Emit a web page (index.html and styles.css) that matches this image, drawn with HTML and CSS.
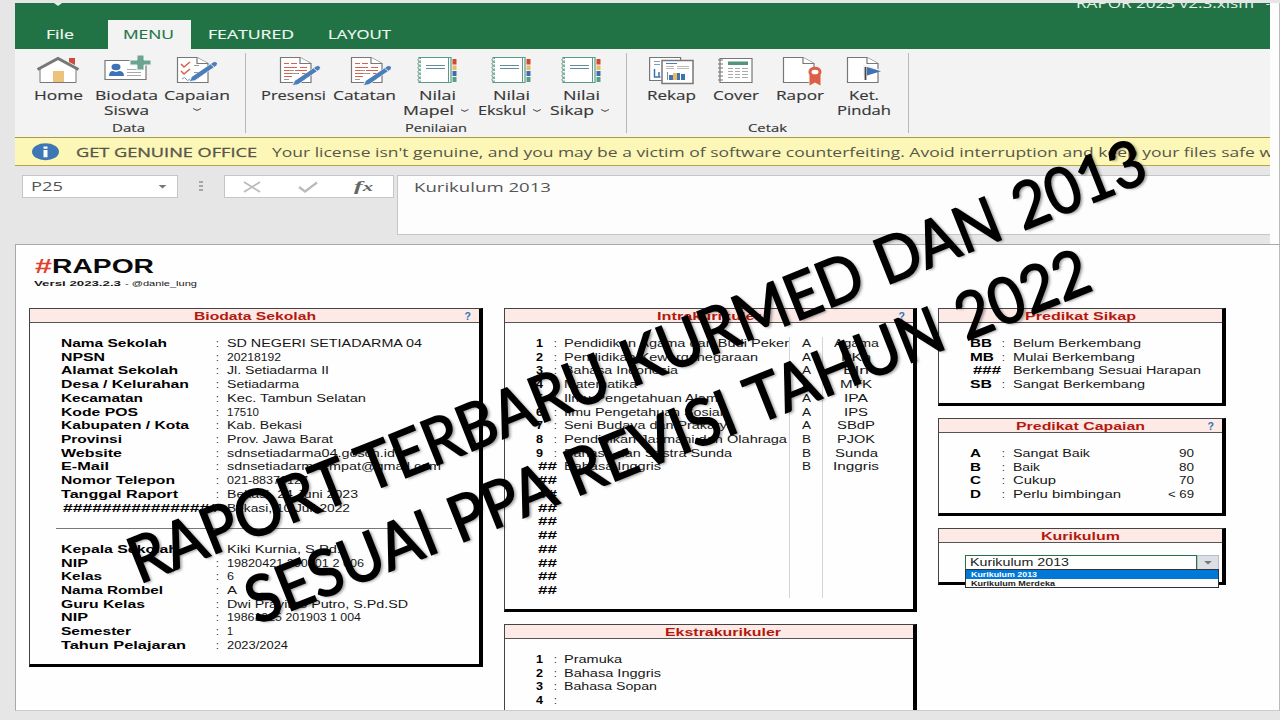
FILE: index.html
```
<!DOCTYPE html>
<html lang="id">
<head>
  <meta charset="UTF-8" />
  <meta name="viewport" content="width=device-width, initial-scale=1.0" />
  <title>RAPOR 2023 v2.3.xlsm</title>
  <link rel="stylesheet" href="styles.css">
</head>
<body>
  <svg width="0" height="0" class="defs">
    <defs>
      <g id="pencil">
        <path d="M14 28 L36 12.500 L39 11.500 L41 14 L19 30 L12 32 Z" fill="#4a7ebb" stroke="#f3f3f3" stroke-width="1"/>
        <path d="M15.500 29 L38.500 13.500" stroke="#4a7ebb" stroke-width="4"/>
        <path d="M33.500 14 L37 17" stroke="#dce6f2" stroke-width="1"/>
      </g>
      <g id="paper">
        <path d="M.5 3.500 H20 L31 9.500 V28.500 H.5 Z" fill="#fff" stroke="#777" stroke-width="1.200"/>
        <path d="M20 3.500 V9.500 H31" fill="#fff" stroke="#777" stroke-width="1.200"/>
      </g>
      <g id="note">
        <use href="#paper"/>
        <path d="M4 9.500h5m2 0h6M4 13.500h13m3 0h7M4 16.500h8m3 0h12M4 19.500h15m3 0h5M4 22.500h8" stroke="#d9604c" stroke-width="1"/>
        <path d="M9 16.500h5M4 25.500h5m3-6h6" stroke="#999" stroke-width="1"/>
        <use href="#pencil"/>
      </g>
      <g id="book">
        <path d="M3 3.500 H35 V28.500 H3 Z" fill="#fff" stroke="#5b9b86" stroke-width="1.200"/>
        <path d="M32.500 3.500 V28.500" stroke="#5b9b86" stroke-width="1"/>
        <path d="M1 5.500h4M1 9.500h4M1 13.500h4M1 17.500h4M1 21.500h4M1 25.500h4" stroke="#f3f3f3" stroke-width="3"/>
        <path d="M5 4.500a2 1.500 0 1 0 0 2.500M5 8.500a2 1.500 0 1 0 0 2.500M5 12.500a2 1.500 0 1 0 0 2.500M5 16.500a2 1.500 0 1 0 0 2.500M5 20.500a2 1.500 0 1 0 0 2.500M5 24.500a2 1.500 0 1 0 0 2.500" fill="none" stroke="#5b9b86" stroke-width="1"/>
        <path d="M10 11.500h19M10 14.500h19" stroke="#5f8f9b" stroke-width="1"/>
        <path d="M36.500 5h4v5.500h-4z" fill="#cc4b31"/>
        <path d="M36.500 11.500h4v4.500h-4z" fill="#ecb968"/>
        <path d="M36.500 17h4v5h-4z" fill="#3f6cab"/>
        <path d="M36.500 23h4v5h-4z" fill="#56a08a"/>
      </g>
    </defs>
  </svg>

  <div class="window">
    <div class="titlebar">
      <i class="qat"></i>
      <span class="file-name" data-w="178">RAPOR 2023 v2.3.xlsm</span>
      <span>-</span>
    </div>
    <div class="tabs">
      <div class="tab file"><span data-w="28">File</span></div>
      <div class="tab active"><span data-w="51">MENU</span></div>
      <div class="tab"><span data-w="86">FEATURED</span></div>
      <div class="tab"><span data-w="63">LAYOUT</span></div>
    </div>

    <div class="ribbon">
      <div class="group data">
        <div class="tools">
          <div class="tool">
            <svg width="44" height="34"><path d="M33 4h6v7l-6-3z" fill="#d0493b"/><path d="M4 15 L22 4 L40 15 V28.500 H4 Z" fill="#fff" stroke="#777" stroke-width="1"/><path d="M1.500 15.500 L22 4.500 L42.500 15.500" fill="none" stroke="#777" stroke-width="3"/><path d="M17 17h11v11h-11z" fill="#ecc27c"/></svg>
            <span data-w="49">Home</span>
          </div>
          <div class="tool">
            <svg width="46" height="34"><path d="M2 6.500h41v19H2z" fill="#fff" stroke="#777" stroke-width="1.200"/><ellipse cx="13" cy="13" rx="4.500" ry="3.200" fill="#3f72b5"/><path d="M6 22q0-5 4-5l3 1 3-1q5 0 5 5z" fill="#3f72b5"/><path d="M24 15.500h14M24 18.500h14M24 21.500h14" stroke="#aaa" stroke-width="1"/><path d="M34 1h7v5h7v5h-7v5h-7v-5h-7v-5h7z" fill="#6ba592" stroke="#f3f3f3"/></svg>
            <span data-w="63">Biodata</span><span data-w="45">Siswa</span>
          </div>
          <div class="tool">
            <svg width="40" height="34"><use href="#paper"/><path d="M4 10l3 3 6-5M4 17l3 3 6-5" fill="none" stroke="#d9604c" stroke-width="1.500"/><path d="M17 11.500h5m-5 7h6" stroke="#999"/><path d="M5 25q3-3 4 0t4 0" fill="none" stroke="#6d94c7"/><use href="#pencil" y="-4"/></svg>
            <span data-w="66">Capaian</span><i class="chev under"></i>
          </div>
        </div>
        <div class="caption"><span data-w="33">Data</span></div>
      </div>
      <div class="group penilaian">
        <div class="tools">
          <div class="tool"><svg class="doc" width="40" height="34"><use href="#note"/></svg><span data-w="65">Presensi</span></div>
          <div class="tool"><svg class="doc" width="40" height="34"><use href="#note"/></svg><span data-w="63">Catatan</span></div>
          <div class="tool"><svg width="42" height="34"><use href="#book"/></svg><span data-w="37">Nilai</span><div class="more"><span data-w="51">Mapel</span><i class="chev"></i></div></div>
          <div class="tool"><svg width="42" height="34"><use href="#book"/></svg><span data-w="37">Nilai</span><div class="more"><span data-w="48">Ekskul</span><i class="chev"></i></div></div>
          <div class="tool"><svg width="42" height="34"><use href="#book"/></svg><span data-w="37">Nilai</span><div class="more"><span data-w="44">Sikap</span><i class="chev"></i></div></div>
        </div>
        <div class="caption"><span data-w="62">Penilaian</span></div>
      </div>
      <div class="group cetak">
        <div class="tools">
          <div class="tool">
            <svg width="44" height="34"><path d="M.6 3.500h31v23h-31z" fill="#fff" stroke="#777" stroke-width="1.200"/><path d="M5 7.500h6M5 10.500h6" stroke="#7a9cc8"/><path d="M5.500 15v8h6M10 18v5" fill="none" stroke="#3f72b5" stroke-width="1.500"/><path d="M13 6.500h31v23h-31z" fill="#fff" stroke="#777" stroke-width="1.500"/><path d="M17 9.500h11" stroke="#4a7ebb"/><path d="M17 12.500h8m3 0h12M17 14.500h8m3 0h12" stroke="#aaa" stroke-width=".8"/><path d="M18.500 18v8" stroke="#888"/><path d="M20 21h4v5h-4zM28 19h3v7h-3z" fill="#3f72b5"/><path d="M24 19h4v7h-4z" fill="#ecb968"/><path d="M32 20h4v6h-4z" fill="#3f72b5"/></svg>
            <span data-w="49">Rekap</span>
          </div>
          <div class="tool">
            <svg width="38" height="34"><path d="M3 4.500h32v24H3z" fill="#fff" stroke="#777" stroke-width="1.200"/><path d="M11 7.500h20v3.500h-20z" fill="#56937b"/><path d="M11 14.500h5m2 0h5m2 0h6M11 17.500h5m2 0h5m2 0h6M11 20.500h5m2 0h5m2 0h6M11 23.500h5m2 0h5m2 0h6" stroke="#aaa"/><path d="M1 6h5M1 10h5M1 14h5M1 18h5M1 22h5M1 26h5" stroke="#777" stroke-width="1"/></svg>
            <span data-w="46">Cover</span>
          </div>
          <div class="tool">
            <svg width="42" height="34"><g transform="translate(4)"><use href="#paper"/></g><path d="M29 14h14v18l-6-3-7 3z" fill="#f3f3f3"/><path d="M30.500 21h11v10.500l-5.500-3-5.500 3z" fill="#dd5f45"/><ellipse cx="36" cy="18" rx="5" ry="3.800" fill="#fff" stroke="#dd5f45" stroke-width="3"/></svg>
            <span data-w="48">Rapor</span>
          </div>
          <div class="tool">
            <svg width="34" height="34"><use href="#paper"/><path d="M16 11h5l14 5.500-14 5h-5z" fill="#f3f3f3"/><path d="M18.500 13v13" stroke="#444" stroke-width="1.800"/><path d="M20 13l14 4.200-14 4.200z" fill="#3f72b5"/></svg>
            <span data-w="30">Ket.</span><span data-w="54">Pindah</span>
          </div>
        </div>
        <div class="caption"><span data-w="39">Cetak</span></div>
      </div>
    </div>

    <div class="notice">
      <svg width="28" height="18"><ellipse cx="13.500" cy="8.700" rx="13.500" ry="8.500" fill="#3f77b5"/><path d="M11.500 3.500h4v2.200h-4zM11.500 7h4v7.200h-4z" fill="#fff"/></svg>
      <span class="notice-title" data-w="181">GET GENUINE OFFICE</span>
      <span data-w="1001">Your license isn't genuine, and you may be a victim of software counterfeiting. Avoid interruption and keep your files safe w</span>
    </div>

    <div class="formula-bar">
      <div class="name-box"><span data-w="32">P25</span><i class="tri"></i></div>
      <svg width="6" height="12"><path d="M3 1v10" stroke="#a6a6a6" stroke-width="4" stroke-dasharray="2 2"/></svg>
      <div class="fx-box">
        <svg width="18" height="12"><path d="M1 1l16 10M17 1l-16 10" stroke="#bbb" stroke-width="1.800"/></svg>
        <svg width="20" height="12"><path d="M1 6l6 4.500L19 1.500" fill="none" stroke="#bbb" stroke-width="2.200"/></svg>
        <span class="fx" data-w="19">f<small>x</small></span>
      </div>
      <div class="formula"><span data-w="137">Kurikulum 2013</span></div>
    </div>
  </div>

  <div class="sheet">
    <div class="brand"><span class="hash" data-w="17">#</span><span data-w="102">RAPOR</span></div>
    <div class="version"><b data-w="87">Versi 2023.2.3</b><span data-w="72">- @danie_lung</span></div>

    <div class="columns">
      <section class="panel sekolah">
        <h2><span data-w="122">Biodata Sekolah</span><i class="help">?</i></h2>
        <div class="rows" id="sekolah"></div>
        <hr>
        <div class="rows" id="kelas"></div>
      </section>

      <div class="col">
        <section class="panel intra">
          <h2><span data-w="104">Intrakurikuler</span><i class="help">?</i></h2>
          <div class="rows" id="intra"></div>
        </section>
        <section class="panel ekstra">
          <h2><span data-w="116">Ekstrakurikuler</span></h2>
          <div class="rows" id="ekstra"></div>
        </section>
      </div>

      <div class="col">
        <section class="panel predikat">
          <h2><span data-w="111">Predikat Sikap</span></h2>
          <div class="rows" id="sikap"></div>
        </section>
        <section class="panel predikat">
          <h2><span data-w="129">Predikat Capaian</span><i class="help">?</i></h2>
          <div class="rows" id="capaian"></div>
        </section>
        <section class="panel kurikulum">
          <h2><span data-w="79">Kurikulum</span></h2>
          <div class="picker">
            <div class="picked"><span data-w="99">Kurikulum 2013</span></div>
            <div class="picker-btn"><i class="tri"></i></div>
            <div class="options">
              <div class="selected"><span data-w="66">Kurikulum 2013</span></div>
              <div><span data-w="84">Kurikulum Merdeka</span></div>
            </div>
          </div>
        </section>
      </div>
    </div>
  </div>

  <div class="headline">
    <div><span data-w="1090">RAPORT TERBARU KURMED DAN 2013</span></div>
    <div><span data-w="903">SESUAI PPA REVISI TAHUN 2022</span></div>
  </div>

  <script src="script.js"></script>
</body>
</html>
```
FILE: styles.css
```
* {
  box-sizing: border-box;
}

body {
  margin: 0;
  width: 1280px;
  height: 720px;
  overflow: hidden;
  position: relative;
  background: #e6e6e6;
  border-top: 3px solid #e6e6e6;
  font-family: "Open Sans", "Noto Sans", sans-serif;
  color: #444;
}

i {
  font-style: normal;
}

svg {
  overflow: visible;
  flex: none;
}

.defs {
  position: absolute;
}

[data-w] {
  display: inline-block;
  white-space: nowrap;
  flex: none;
  transform-origin: left center;
}

.window {
  margin-left: 15px;
  width: 1265px;
  height: 241px;
  overflow: hidden;
  background: linear-gradient(to right, #e6e6e6 1255px, #fdfdfd 1255px);
  border-right: 1px solid #bbb;
  padding-right: 9px;
}

/* title bar and tabs */
.titlebar {
  height: 17px;
  display: flex;
  justify-content: flex-end;
  gap: 12px;
  background: #217346;
  color: #e6f1ea;
  font-size: 13px;
  line-height: 17px;
  overflow: hidden;
}

.titlebar span {
  margin-top: -8px;
}

.qat {
  width: 8px;
  height: 3px;
  margin-right: auto;
  margin-left: 39px;
  background: #e6f1ea;
  clip-path: polygon(0 0, 100% 0, 50% 100%);
}

.tabs {
  height: 29px;
  display: flex;
  background: #217346;
  color: #f2f8f4;
  font-size: 12.500px;
  line-height: 29px;
  -webkit-text-stroke: .15px;
}

.tab {
  padding-right: 34px;
}

.tab.file {
  width: 93px;
  padding: 0 0 0 31px;
}

.tab.active {
  width: 83px;
  margin-right: 17px;
  padding: 0 0 0 15px;
  background: #f3f3f3;
  color: #217346;
}

/* ribbon */
.ribbon {
  height: 88px;
  display: flex;
  background: #f3f3f3;
  color: #363636;
  -webkit-text-stroke: .15px;
}

.group {
  height: 80px;
  margin-top: 4px;
  border-right: 1px solid #b8b8b8;
}

.group.data {
  width: 231px;
  padding-left: 9px;
}

.group.penilaian {
  width: 381px;
  padding-left: 11px;
}

.group.cetak {
  width: 282px;
  padding-left: 11px;
}

.tools {
  height: 68px;
  padding-top: 1px;
  display: grid;
}

.data .tools {
  grid-template-columns: 68px 68px 74px;
}

.penilaian .tools {
  grid-template-columns: 72px 70px 76px 72px 68px;
}

.cetak .tools {
  grid-template-columns: 66px 64px 64px 64px;
}

.tool {
  display: flex;
  flex-direction: column;
  align-items: center;
  font-size: 12.500px;
  line-height: 15px;
}

.tool svg.doc {
  margin-left: 14px;
}

.more {
  display: flex;
  align-items: center;
  gap: 7px;
  margin-left: -3px;
}

.chev {
  width: 8px;
  height: 3px;
  background: #555;
  clip-path: polygon(0 0, 50% 60%, 100% 0, 100% 35%, 50% 100%, 0 35%);
}

.chev.under {
  margin-top: 5px;
}

.caption {
  display: flex;
  justify-content: center;
  font-size: 11px;
  line-height: 14px;
}

.data .caption {
  padding-right: 13px;
}

.penilaian .caption {
  padding-right: 12px;
}

.cetak .caption {
  padding-right: 11px;
}

/* licence notice */
.notice {
  height: 29px;
  padding: 1px 0 0 17px;
  display: flex;
  align-items: center;
  overflow: hidden;
  background: #fcf7b6;
  border-top: 1px solid #a99d3c;
  border-bottom: 1px solid #b5a54a;
  font-size: 12.500px;
  color: #57564a;
}

.notice-title {
  margin-left: 16px;
  -webkit-text-stroke: .3px #57564a;
}

.notice-title + span {
  margin-left: 15px;
}

/* formula bar */
.formula-bar {
  padding: 9px 0 0 7px;
  display: flex;
  align-items: flex-start;
  font-size: 12px;
  color: #555;
}

.formula-bar > svg {
  margin: 5px 20px 0;
}

.name-box,
.fx-box {
  height: 23px;
  display: flex;
  align-items: center;
  justify-content: space-between;
  background: #fff;
  border: 1px solid #c6c6c6;
}

.name-box {
  width: 156px;
  padding: 0 10px 0 8px;
}

.tri {
  width: 9px;
  height: 4px;
  background: #777;
  clip-path: polygon(0 0, 100% 0, 50% 100%);
}

.fx-box {
  width: 170px;
  padding: 0 20px 0 18px;
}

.fx {
  font: italic bold 15px "Liberation Serif", serif;
  color: #666;
}

.fx small {
  font-size: 12px;
}

.formula {
  flex: 1;
  height: 60px;
  margin-left: 3px;
  padding: 3px 0 0 16px;
  background: #fdfdfd;
  border: 1px solid #c6c6c6;
  border-right: 0;
}

/* worksheet */
.sheet {
  --row: 13.73px;
  margin-left: 15px;
  height: 467px;
  overflow: hidden;
  padding-left: 13px;
  background: #fefefe;
  border: 1px solid #a8a8a8;
  border-right-color: #bbb;
  border-bottom-color: #ccc;
  font-family: "Liberation Sans", sans-serif;
  font-size: 10px;
  color: #161616;
}

.brand {
  height: 23px;
  padding: 10px 0 0 6px;
  display: flex;
  font-size: 20px;
  line-height: 23px;
  font-weight: bold;
  color: #0a0a0a;
}

.hash {
  color: #e2402c;
}

.version {
  padding: 10px 0 0 5px;
  height: 40px;
  display: flex;
  gap: 4px;
  font-size: 8px;
  line-height: 12px;
}

.columns {
  display: flex;
  align-items: flex-start;
}

.col {
  display: flex;
  flex-direction: column;
  gap: 12px;
  margin-left: 21px;
}

.panel {
  border: 1px solid #444;
  border-right: 4px solid #000;
  border-bottom: 3px solid #000;
}

.panel h2 {
  height: 14px;
  margin: 0 0 14px;
  display: flex;
  justify-content: center;
  position: relative;
  background: #fdeae6;
  border-bottom: 1px solid #555;
  font-size: 10.500px;
  line-height: 14px;
  color: #b3190f;
}

.help {
  position: absolute;
  right: 8px;
  color: #2e75b6;
}

.row {
  height: var(--row);
  display: grid;
  line-height: var(--row);
}

.row > * {
  white-space: nowrap;
}

.row b {
  color: #000;
}

.sekolah {
  width: 454px;
  height: 359px;
}

.sekolah .row {
  grid-template-columns: 155px 11px 1fr;
  padding-left: 31px;
}

.sekolah hr {
  height: 1px;
  margin: 13px 27px 13.460px 26px;
  border: 0;
  background: #777;
}

.intra,
.ekstra {
  width: 413px;
}

.intra {
  height: 304px;
}

.intra .row,
.ekstra .row {
  grid-template-columns: 18px 10px 225px 34px 1fr;
  padding: 0 24px 0 31px;
}

.intra .rows {
  background: linear-gradient(#d4d4d4, #d4d4d4) 284px 0 / 1px 100% no-repeat,
    linear-gradient(#d4d4d4, #d4d4d4) 317px 0 / 1px 100% no-repeat;
}

.row .clip {
  overflow: hidden;
}

.row .mid {
  text-align: center;
}

.row .over {
  padding-left: 2px;
}

.ekstra {
  height: 110px;
}

.ekstra h2 {
  padding-left: 27px;
}

.predikat {
  width: 288px;
  height: 98px;
}

.predikat .row {
  grid-template-columns: 32px 11px 1fr auto;
  padding: 0 28px 0 31px;
}

.predikat .over {
  padding-left: 3px;
}

.kurikulum {
  width: 288px;
  height: 57px;
}

.kurikulum h2 {
  margin-bottom: 12px;
}

.picker {
  width: 254px;
  margin-left: 26px;
  display: flex;
  position: relative;
  color: #222;
}

.picked {
  flex: 1;
  height: 15px;
  padding-left: 4px;
  background: #fff;
  border: 1px solid #217346;
  font-size: 11px;
  line-height: 13px;
}

.picker-btn {
  width: 22px;
  height: 15px;
  display: flex;
  align-items: center;
  justify-content: center;
  background: #dcdfe6;
  border: 1px solid #b9bcc4;
}

/* open list under the validation cell */
.options {
  position: absolute;
  top: 14px;
  left: 0;
  width: 254px;
  height: 19px;
  background: #fff;
  border: 1px solid #333;
  font-size: 7px;
  font-weight: bold;
  line-height: 9px;
}

.options div {
  height: 8.500px;
  padding-left: 5px;
}

.options .selected {
  background: #0078d7;
  color: #fff;
}

/* slanted headline over the whole window */
.headline {
  position: absolute;
  left: 115px;
  top: 521px;
  width: 1090px;
  transform: rotate(-21.800deg);
  transform-origin: 0 0;
  font-family: Lato, sans-serif;
  font-size: 64px;
  line-height: 81px;
  word-spacing: 3px;
  text-align: center;
  color: #000;
  -webkit-text-stroke: 1.600px #000;
  text-shadow: 2px 2px 3px rgba(0, 0, 0, 0.4);
}
```
FILE: script.js
```
// [label, label width, value, value width]
const sekolah = [
  ["Nama Sekolah", 106, "SD NEGERI SETIADARMA 04", 195],
  ["NPSN", 44, "20218192", 54],
  ["Alamat Sekolah", 117, "Jl. Setiadarma II", 102],
  ["Desa / Kelurahan", 128, "Setiadarma", 72],
  ["Kecamatan", 82, "Kec. Tambun Selatan", 139],
  ["Kode POS", 77, "17510", 32],
  ["Kabupaten / Kota", 128, "Kab. Bekasi", 75],
  ["Provinsi", 61, "Prov. Jawa Barat", 106],
  ["Website", 61, "sdnsetiadarma04.gosch.id", 168],
  ["E-Mail", 48, "sdnsetiadarmaempat@gmail.com", 214],
  ["Nomor Telepon", 114, "021-88376127", 81],
  ["Tanggal Raport", 117, "Bekasi, 24 Juni 2023", 131],
  ["################", 156, "Bekasi, 10 Juli 2022", 123],
];

const kelas = [
  ["Kepala Sekolah", 117, "Kiki Kurnia, S.Pd.I", 118],
  ["NIP", 27, "19820421 200801 2 006", 137],
  ["Kelas", 41, "6", 7],
  ["Nama Rombel", 102, "A", 10],
  ["Guru Kelas", 84, "Dwi Prayitno Putro, S.Pd.SD", 181],
  ["NIP", 27, "19861025 201903 1 004", 134],
  ["Semester", 70, "1", 6],
  ["Tahun Pelajaran", 125, "2023/2024", 61],
];

// [name, width, group, short name, width]
const intra = [
  ["Pendidikan Agama dan Budi Peker", 225, "A", "Agama", 45],
  ["Pendidikan Kewarganegaraan", 194, "A", "PKn", 30],
  ["Bahasa Indonesia", 114, "A", "BIn", 26],
  ["Matematika", 73, "A", "MTK", 32],
  ["Ilmu Pengetahuan Alam", 154, "A", "IPA", 24],
  ["Ilmu Pengetahuan Sosial", 159, "A", "IPS", 24],
  ["Seni Budaya dan Prakarya", 171, "A", "SBdP", 38],
  ["Pendidikan Jasmani dan Olahraga", 223, "B", "PJOK", 38],
  ["Bahasa dan Sastra Sunda", 168, "B", "Sunda", 43],
  ["Bahasa Inggris", 97, "B", "Inggris", 46],
];

const ekstra = [["Pramuka", 58], ["Bahasa Inggris", 97], ["Bahasa Sopan", 93], ["", 0]];

const sikap = [
  ["BB", 22, "Belum Berkembang", 128],
  ["MB", 24, "Mulai Berkembang", 122],
  ["###", 28, "Berkembang Sesuai Harapan", 188],
  ["SB", 22, "Sangat Berkembang", 132],
];

const capaian = [
  ["A", 11, "Sangat Baik", 77, "90", 15],
  ["B", 11, "Baik", 27, "80", 15],
  ["C", 11, "Cukup", 43, "70", 15],
  ["D", 11, "Perlu bimbingan", 108, "&lt; 69", 26],
];

function text(value, width, tag = "span") {
  return value ? `<${tag} data-w="${width}">${value}</${tag}>` : "";
}

function cell(content, cls = "") {
  return `<div class="${cls}">${content}</div>`;
}

function fill(id, rows) {
  document.getElementById(id).innerHTML = rows.map(r => `<div class="row">${r}</div>`).join("");
}

function pairRow([label, lw, value, vw, extra, ew]) {
  const hashes = label.startsWith("##");
  return cell(text(label, lw, "b"), hashes ? "over" : "") +
    cell(hashes ? "" : ":") +
    cell(text(value, vw)) +
    (extra ? cell(text(extra, ew)) : "");
}

fill("sekolah", sekolah.map(pairRow));
fill("kelas", kelas.map(pairRow));
fill("sikap", sikap.map(pairRow));
fill("capaian", capaian.map(pairRow));

const intraRows = [];
for (let i = 0; i < 19; i++) {
  const [name, nw, group, short, sw] = intra[i] || ["", 0, "", "", 0];
  // two-digit numbers do not fit in the narrow column
  const no = i < 9 ? text(i + 1, 7, "b") : text("##", 19, "b");
  intraRows.push(
    cell(no, i < 9 ? "" : "over") + cell(i < 9 ? ":" : "") + cell(text(name, nw), "clip") +
    cell(text(group, 9), "mid") + cell(text(short, sw), "mid")
  );
}
fill("intra", intraRows);
fill("ekstra", ekstra.map(([name, w], i) => cell(text(i + 1, 7, "b")) + cell(":") + cell(text(name, w))));

// stretch every label to its column width
document.querySelectorAll("[data-w]").forEach(el => {
  const width = Number(el.dataset.w);
  const natural = parseFloat(getComputedStyle(el).width);
  el.style.transform = `scaleX(${width / natural})`;
  el.style.marginRight = `${width - natural}px`;
});
```
